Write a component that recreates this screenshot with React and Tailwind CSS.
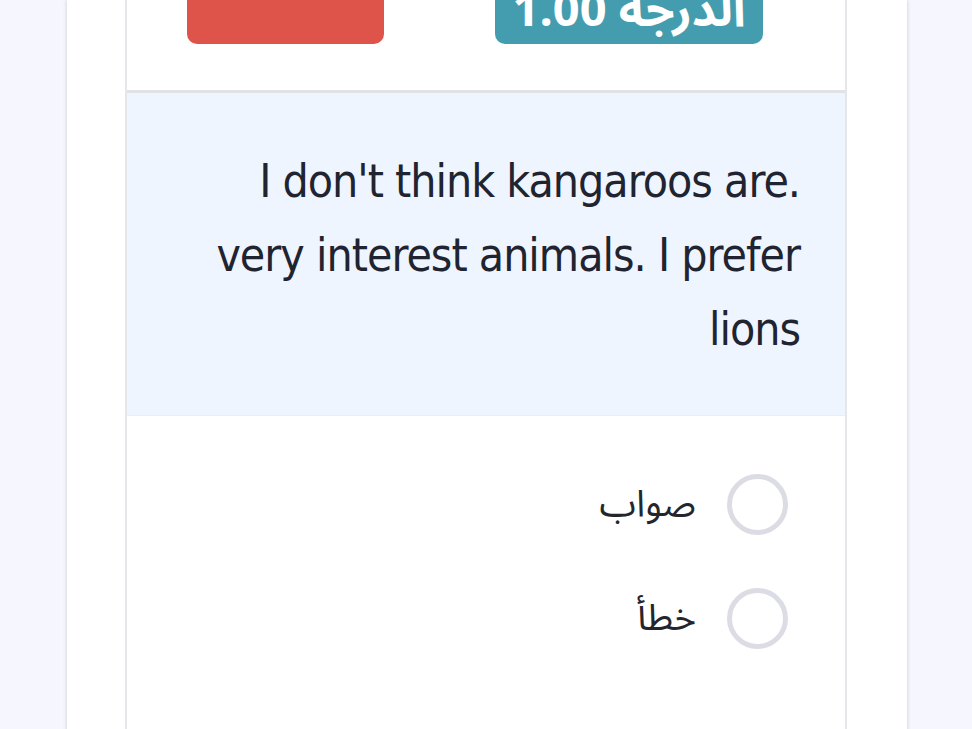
import React from "react";

function RadioOption({ label }) {
  return (
    <label className="flex items-center justify-end gap-[31px]">
      <span className="text-[37px] text-[#23262d] [font-family:'Noto_Sans_Arabic','DejaVu_Sans',sans-serif]">
        {label}
      </span>
      <span className="w-[61px] h-[61px] rounded-full border-[5px] border-[#dcdce4] bg-white shrink-0" />
    </label>
  );
}

export default function App() {
  return (
    <div className="min-h-screen bg-[#f6f7fe] flex justify-center overflow-hidden pl-[2px]">
      <div className="w-[840px] bg-white shadow-[0_0_4px_rgba(0,0,0,0.18)] pl-[58px] pr-[60px]">
        <div className="-mt-[36px] border-x-2 border-[#e6e6ea] bg-white min-h-[800px]">
          {/* top actions */}
          <div className="flex justify-between pl-[60px] pr-[82px] pb-[46px] border-b-[3px] border-[#e2e2e6]">
            <button className="w-[197px] h-[80px] rounded-[10px] bg-[#de534a]" />
            <div
              dir="rtl"
              className="w-[268px] h-[80px] rounded-[10px] bg-[#449dae] flex items-end justify-center pb-[9px] text-white text-[47px] font-bold leading-none [font-family:'Noto_Sans_Arabic','DejaVu_Sans',sans-serif]"
            >
              الدرجة 1.00
            </div>
          </div>

          {/* question */}
          <div className="bg-[#eef5fe] border-b border-[#e8eef6] pt-[51px] pb-[49px] pl-[40px] pr-[45px]">
            <p
              dir="rtl"
              className="text-right text-[46px] leading-[74px] tracking-[-1px] text-[#1f2430] [font-family:'Liberation_Sans_Narrow','DejaVu_Sans_Condensed','Roboto',sans-serif]"
            >
              I don't think kangaroos are. very interest animals. I prefer lions
            </p>
          </div>

          {/* answers */}
          <div dir="ltr" className="flex flex-col gap-[53px] pt-[58px] pr-[57px]">
            <RadioOption label="صواب" />
            <RadioOption label="خطأ" />
          </div>
        </div>
      </div>
    </div>
  );
}
